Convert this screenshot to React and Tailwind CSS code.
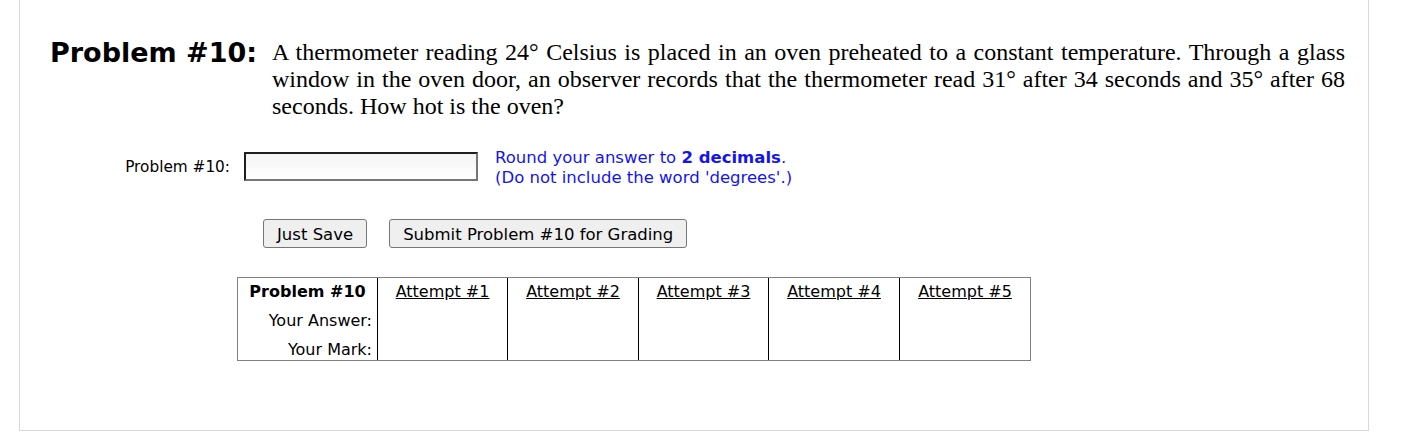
const verdana = { fontFamily: 'Verdana, "DejaVu Sans", sans-serif' };

const attempts = ['Attempt #1', 'Attempt #2', 'Attempt #3', 'Attempt #4', 'Attempt #5'];
const colWidths = ['w-[130px]', 'w-[131px]', 'w-[130px]', 'w-[131px]', 'w-[131px]'];

export default function App() {
	return (
		<div className="min-h-screen bg-white pl-[19px]">
			<div className="w-[1350px] h-[431px] border-x border-b border-[#d9d9d9] pt-[35px]">
				{/* problem statement */}
				<div className="flex items-baseline pl-[30px]">
					<h2 className="w-[222px] shrink-0 text-[27px] font-bold text-black leading-[32px] relative top-[2px]" style={verdana}>
						Problem #10:
					</h2>
					<p className="w-[1073px] text-justify text-[24px] leading-[27px] text-black font-['Liberation_Serif',serif]">
						A thermometer reading 24° Celsius is placed in an oven preheated to a constant temperature. Through a glass
						window in the oven door, an observer records that the thermometer read 31° after 34 seconds and 35° after 68
						seconds. How hot is the oven?
					</p>
				</div>

				{/* answer row */}
				<div className="flex items-start mt-[28px]" style={verdana}>
					<label className="w-[210px] shrink-0 text-right text-[15.3px] leading-[18px] text-black mt-[10px]">
						Problem #10:
					</label>
					<input
						type="text"
						className="ml-[14px] mt-[4px] w-[234px] h-[29px] border-2 border-[#1f1f1f] border-r-[#767676] border-b-[#767676] bg-gradient-to-b from-[#f4f4f4] to-white outline-none"
					/>
					<div className="ml-[17px] text-[16.5px] leading-[20px] text-[#1414f0]">
						<div>
							Round your answer to <b>2 decimals</b>.
						</div>
						<div>(Do not include the word 'degrees'.)</div>
					</div>
				</div>

				{/* buttons */}
				<div className="flex gap-[22px] mt-[31px] pl-[243px]" style={verdana}>
					<button className="h-[29px] px-[13px] pt-[3px] bg-[#efefef] border border-[#767676] rounded-[3px] text-[16.5px] leading-[20px] text-black">
						Just Save
					</button>
					<button className="h-[29px] px-[13px] pt-[3px] bg-[#efefef] border border-[#767676] rounded-[3px] text-[16.5px] leading-[20px] text-black">
						Submit Problem #10 for Grading
					</button>
				</div>

				{/* attempts table */}
				<div className="mt-[29px] pl-[217px]" style={verdana}>
					<table className="table-fixed border-separate border-spacing-0 border border-[#808080] w-[794px] text-[16px] text-black">
						<thead>
							<tr>
								<th className="w-[139px] font-bold text-center leading-[20px] pt-[4px] pb-0">Problem #10</th>
								{attempts.map((a, i) => (
									<td
										key={a}
										className={`${colWidths[i]} border-l border-black text-center font-normal leading-[20px] pt-[4px] pb-0`}>
										<span className="underline">{a}</span>
									</td>
								))}
							</tr>
						</thead>
						<tbody>
							<tr>
								<td className="text-right pr-[5px] leading-[20px] pt-[9px]">Your Answer:</td>
								{attempts.map((a) => (
									<td key={a} className="border-l border-black"></td>
								))}
							</tr>
							<tr>
								<td className="text-right pr-[5px] leading-[20px] pt-[9px]">Your Mark:</td>
								{attempts.map((a) => (
									<td key={a} className="border-l border-black"></td>
								))}
							</tr>
						</tbody>
					</table>
				</div>
			</div>
		</div>
	);
}
